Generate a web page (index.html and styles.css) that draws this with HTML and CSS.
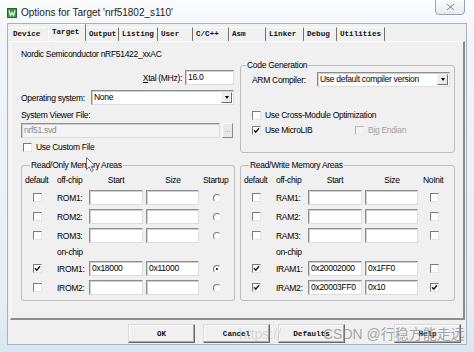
FILE: index.html
```html
<!DOCTYPE html>
<html lang="en">
  <head>
    <meta charset="UTF-8" />
    <meta name="viewport" content="width=device-width, initial-scale=1.0" />
    <title>Options for Target</title>
    <link rel="stylesheet" href="styles.css">
  </head>
  <body>
    <div class="titlebar">
      <svg class="app-icon" viewBox="0 0 10 10">
        <rect x="0.5" y="0.5" width="9" height="9" fill="#3a9c3f" stroke="#1f6b24" />
        <path d="M2 2.5 L3.5 7.5 L5 4.5 L6.5 7.5 L8 2.5" fill="none" stroke="#fff" stroke-width="1.1" />
      </svg>
      <span class="title">Options for Target 'nrf51802_s110'</span>
      <div class="close-btn">
        <svg viewBox="0 0 9 8" width="9" height="8">
          <path d="M1 1 L8 7 M8 1 L1 7" stroke="#fff" stroke-width="2.4" />
          <path d="M1 1 L8 7 M8 1 L1 7" stroke="#6d737b" stroke-width="1" />
        </svg>
      </div>
    </div>

    <div class="client">
      <div class="tabs">
        <span class="tab">Device</span>
        <span class="tab active">Target</span>
        <span class="tab">Output</span>
        <span class="tab">Listing</span>
        <span class="tab">User</span>
        <span class="tab">C/C++</span>
        <span class="tab">Asm</span>
        <span class="tab">Linker</span>
        <span class="tab">Debug</span>
        <span class="tab">Utilities</span>
      </div>

      <div class="panel">
        <div class="top">
          <div class="left-col">
            <div class="device-name">Nordic Semiconductor nRF51422_xxAC</div>
            <div class="xtal-row">
              <span class="xtal-label"><u>X</u>tal (MHz):</span>
              <span class="edit xtal">16.0</span>
            </div>
            <div class="os-row">
              <span>Operating system:</span>
              <span class="combo os"><span class="combo-text">None</span><span class="combo-btn"></span></span>
            </div>
            <div class="svf-label">System Viewer File:</div>
            <div class="svf-row">
              <span class="edit disabled svf">nrf51.svd</span>
              <span class="browse">...</span>
            </div>
            <div class="check-row custom">
              <span class="check"></span>
              <span>Use Custom File</span>
            </div>
          </div>

          <div class="group codegen">
            <div class="caption">Code Generation</div>
            <div class="cg-row arm-row">
              <span class="arm-label">ARM Compiler:</span>
              <span class="combo arm"><span class="combo-text">Use default compiler version</span><span class="combo-btn"></span></span>
            </div>
            <div class="cg-row check-row cross">
              <span class="check"></span>
              <span>Use Cross-Module Optimization</span>
            </div>
            <div class="cg-row check-row micro">
              <span class="micro-item">
                <span class="check"><svg class="tick" viewBox="0 0 7 7"><path d="M1 3.2 L2.8 5.2 L6 1.3" /></svg></span>
                <span>Use MicroLIB</span>
              </span>
              <span class="micro-item off">
                <span class="check disabled"></span>
                <span>B<u>i</u>g Endian</span>
              </span>
            </div>
          </div>
        </div>

        <div class="memory">
          <div class="group mem">
            <div class="caption">Read/Only Memory Areas</div>
            <div class="mem-head">
              <span>default</span><span>off-chip</span><span class="col-mid start">Start</span><span class="col-mid size">Size</span><span>Startup</span>
            </div>
            <div class="mem-row">
              <span class="check"></span><span>ROM1:</span><span class="edit start"></span><span class="edit size"></span><span class="radio"></span>
            </div>
            <div class="mem-row">
              <span class="check"></span><span>ROM2:</span><span class="edit start"></span><span class="edit size"></span><span class="radio"></span>
            </div>
            <div class="mem-row">
              <span class="check"></span><span>ROM3:</span><span class="edit start"></span><span class="edit size"></span><span class="radio"></span>
            </div>
            <div class="onchip">on-chip</div>
            <div class="mem-row">
              <span class="check"><svg class="tick" viewBox="0 0 7 7"><path d="M1 3.2 L2.8 5.2 L6 1.3" /></svg></span><span>IROM1:</span><span class="edit start">0x18000</span><span class="edit size">0x11000</span><span class="radio on"></span>
            </div>
            <div class="mem-row">
              <span class="check"></span><span>IROM2:</span><span class="edit start"></span><span class="edit size"></span><span class="radio"></span>
            </div>
          </div>

          <div class="group mem">
            <div class="caption">Read/Write Memory Areas</div>
            <div class="mem-head">
              <span>default</span><span>off-chip</span><span class="col-mid start">Start</span><span class="col-mid size">Size</span><span class="noinit-head">NoInit</span>
            </div>
            <div class="mem-row">
              <span class="check"></span><span>RAM1:</span><span class="edit start"></span><span class="edit size"></span><span class="check noinit"></span>
            </div>
            <div class="mem-row">
              <span class="check"></span><span>RAM2:</span><span class="edit start"></span><span class="edit size"></span><span class="check noinit"></span>
            </div>
            <div class="mem-row">
              <span class="check"></span><span>RAM3:</span><span class="edit start"></span><span class="edit size"></span><span class="check noinit"></span>
            </div>
            <div class="onchip">on-chip</div>
            <div class="mem-row">
              <span class="check"><svg class="tick" viewBox="0 0 7 7"><path d="M1 3.2 L2.8 5.2 L6 1.3" /></svg></span><span>IRAM1:</span><span class="edit start">0x20002000</span><span class="edit size">0x1FF0</span><span class="check noinit"></span>
            </div>
            <div class="mem-row">
              <span class="check"><svg class="tick" viewBox="0 0 7 7"><path d="M1 3.2 L2.8 5.2 L6 1.3" /></svg></span><span>IRAM2:</span><span class="edit start">0x20003FF0</span><span class="edit size">0x10</span><span class="check noinit"><svg class="tick" viewBox="0 0 7 7"><path d="M1 3.2 L2.8 5.2 L6 1.3" /></svg></span>
            </div>
          </div>
        </div>
      </div>

      <div class="buttons">
        <span class="btn">OK</span>
        <span class="btn">Cancel</span>
        <span class="btn">Defaults</span>
        <span class="btn help">Help</span>
      </div>
    </div>

    <!-- overlays: blog watermark and the mouse pointer -->
    <div class="watermark">
      <span class="wm-url">https://</span>
      <span class="wm-text">CSDN @行稳方能走远</span>
    </div>
    <svg class="cursor" viewBox="0 0 10 16">
      <path d="M0.5 0.5 L0.5 12.5 L3.3 9.8 L5.3 14.5 L7.2 13.7 L5.2 9.2 L9 9.2 Z" fill="#fff" stroke="#555" stroke-width="0.8" />
    </svg>
  </body>
</html>
```

FILE: styles.css
```css
* {
  margin: 0;
  padding: 0;
  box-sizing: border-box;
}

body {
  position: relative;
  width: 474px;
  height: 352px;
  overflow: hidden;
  background: linear-gradient(to bottom, #fbfcfd 0, #f1f4f8 40px, #e9eef4 300px, #d7e7f1 100%);
  font-family: "Liberation Sans", Arial, sans-serif;
  font-size: 8.5px;
  letter-spacing: -0.3px;
  color: #000;
}

/* title bar */
.titlebar {
  height: 23px;
  display: flex;
  align-items: flex-start;
}

.app-icon {
  width: 10px;
  height: 10px;
  margin: 8px 0 0 7px;
}

.title {
  margin: 6px 0 0 4px;
  font-size: 10px;
  line-height: 13px;
  letter-spacing: 0;
  color: #1b1b1b;
}

.close-btn {
  margin: -1px 9px 0 auto;
  width: 30px;
  height: 16px;
  border: 1px solid #98a1ad;
  border-radius: 0 0 4px 4px;
  background: linear-gradient(#fbfcfd, #e6eaef);
  display: flex;
  align-items: center;
  justify-content: center;
}

/* dialog client area */
.client {
  margin: 0 7px;
  height: 322px;
  border: 1px solid #a8b1bc;
  background: #f0f0f0;
}

.tabs {
  display: grid;
  grid-template-columns: 38px 38px 33px 39px 35px 36px 37px 38px 33px 48px;
  height: 17px;
  margin-left: 2px;
  align-items: end;
}

.tab {
  height: 14px;
  padding-left: 3px;
  border-top: 1px solid #fff;
  border-right: 1px solid #6f6f6f;
  font: bold 7.6px "Liberation Mono", monospace;
  line-height: 13px;
  letter-spacing: 0;
  white-space: nowrap;
  color: #111;
}

.tab.active {
  height: 17px;
  padding-top: 1px;
  line-height: 12px;
  border-left: 1px solid #fff;
  background: #f0f0f0;
  box-shadow: -2px 0 0 #f0f0f0;
}

.panel {
  margin-left: 2px;
  width: 455px;
  height: 279px;
  border-top: 1px solid #fff;
  border-left: 1px solid #fff;
  border-right: 2px solid #8c8c8c;
  border-bottom: 2px solid #8c8c8c;
  padding: 5px 0 0 10px;
}

.top,
.memory {
  display: grid;
  grid-template-columns: 214px 215px;
  column-gap: 5px;
}

.memory {
  margin-top: 12px;
}

/* left column */
.device-name {
  height: 14px;
  line-height: 14px;
}

.xtal-row {
  margin-top: 9px;
  height: 15px;
  display: flex;
  justify-content: flex-end;
  align-items: center;
}

.xtal-label {
  margin-right: 3px;
}

.os-row {
  margin-top: 5px;
  height: 15px;
  display: flex;
  align-items: center;
}

.svf-label {
  margin-top: 3px;
  height: 14px;
  line-height: 14px;
}

.svf-row {
  margin-top: 1px;
  display: flex;
}

.check-row {
  height: 12px;
  display: flex;
  align-items: center;
  gap: 4px;
}

.custom {
  margin-top: 3px;
  padding-left: 2px;
}

/* controls */
.edit {
  display: block;
  height: 15px;
  padding-left: 2px;
  line-height: 13px;
  border: 1px solid;
  border-color: #8d8e8f #dedede #dedede #8d8e8f;
  box-shadow: inset 1px 1px 0 #cfcfcf;
  background: #fff;
  white-space: nowrap;
  overflow: hidden;
}

.edit.disabled {
  background: #f4f4f4;
  color: #8a8a8a;
}

.xtal {
  width: 49px;
  margin-right: 1px;
}

.svf {
  width: 199px;
}

.browse {
  width: 11px;
  height: 15px;
  margin-left: 2px;
  border: 1px solid;
  border-color: #fff #8a8a8a #8a8a8a #fff;
  background: #e9e9e9;
  color: #8a8a8a;
  font-size: 7px;
  line-height: 12px;
  text-align: center;
  letter-spacing: 0;
}

.combo {
  display: flex;
  height: 15px;
  border: 1px solid;
  border-color: #8d8e8f #dedede #dedede #8d8e8f;
  box-shadow: inset 1px 1px 0 #cfcfcf;
  background: #fff;
}

.combo-text {
  flex: 1;
  padding-left: 2px;
  line-height: 13px;
  white-space: nowrap;
}

.combo-btn {
  width: 11px;
  margin: 1px;
  border: 1px solid;
  border-color: #f4f4f4 #6e6e6e #6e6e6e #f4f4f4;
  background: #ececec;
  display: flex;
  align-items: center;
  justify-content: center;
}

.combo-btn::after {
  content: "";
  border-left: 2.5px solid transparent;
  border-right: 2.5px solid transparent;
  border-top: 3px solid #000;
}

.os {
  width: 143px;
  margin: 0 1px 0 auto;
}

.check {
  display: flex;
  align-items: center;
  justify-content: center;
  width: 9px;
  height: 9px;
  border: 1px solid;
  border-color: #7b7b7b #e4e4e4 #e4e4e4 #7b7b7b;
  background: #fff;
}

.check.disabled {
  border-color: #b8b8b8 #ececec #ececec #b8b8b8;
  background: #f3f3f3;
}

.tick {
  width: 7px;
  height: 7px;
}

.tick path {
  fill: none;
  stroke: #111;
  stroke-width: 1.4;
}

.radio {
  display: flex;
  align-items: center;
  justify-content: center;
  width: 8px;
  height: 8px;
  margin-left: 10px;
  border-radius: 50%;
  border: 1px solid;
  border-color: #7b7b7b #ececec #ececec #7b7b7b;
  background: #fff;
}

.radio.on::after {
  content: "";
  width: 2px;
  height: 2px;
  border-radius: 50%;
  background: #000;
}

/* group boxes */
.group {
  border: 1px solid #bcbcbc;
  border-radius: 3px;
}

.caption {
  width: fit-content;
  height: 12px;
  margin: -7px 0 0 5px;
  padding: 0 1px;
  line-height: 12px;
  background: #f0f0f0;
}

.codegen {
  margin-top: 18px;
  height: 88px;
}

.cg-row {
  padding-left: 11px;
}

.arm-row {
  margin-top: 1px;
  height: 15px;
  display: flex;
  align-items: center;
}

.arm-label {
  width: 65px;
}

.arm {
  width: 133px;
}

.cross {
  margin-top: 22px;
}

.micro {
  margin-top: 3px;
}

.micro-item {
  display: flex;
  align-items: center;
  gap: 4px;
  width: 104px;
}

.micro-item.off {
  color: #a3a3a3;
}

/* memory areas */
.mem {
  height: 136px;
  padding: 0 0 3px 3px;
}

.mem-head,
.mem-row {
  display: grid;
  grid-template-columns: 32px 32px 57px 57px 1fr;
}

.mem-head {
  height: 12px;
  margin: 3px 0 2px;
  line-height: 12px;
}

.col-mid {
  width: 54px;
  text-align: center;
}

.noinit-head {
  margin-left: 1px;
}

.mem-row {
  height: 19px;
  align-items: center;
}

.mem-row > .check:first-child {
  margin-left: 8px;
}

.mem-row .noinit {
  margin-left: 8px;
}

.edit.start {
  width: 54px;
}

.edit.size {
  width: 53px;
}

.onchip {
  height: 14px;
  padding-left: 32px;
  line-height: 14px;
}

/* bottom buttons */
.buttons {
  display: flex;
  gap: 8px;
  margin-top: 4px;
  padding-left: 120px;
}

.btn {
  width: 67px;
  height: 19px;
  display: flex;
  align-items: center;
  justify-content: center;
  border: 1px solid;
  border-color: #d8d8d8 #6a6a6a #6a6a6a #d8d8d8;
  box-shadow: inset -1px -1px 0 #a8a8a8, inset 1px 1px 0 #fff;
  background: #f0f0f0;
  font: bold 7.6px "Liberation Mono", monospace;
  letter-spacing: 0;
  color: #111;
}

.btn.help {
  margin-left: 41px;
}

/* overlays */
.watermark {
  position: absolute;
  left: 239px;
  top: 326px;
  display: flex;
  font-family: "Liberation Sans", "Noto Sans CJK SC", sans-serif;
  font-size: 14px;
  line-height: 16px;
  letter-spacing: 0;
  white-space: nowrap;
}

.wm-url {
  width: 84px;
  color: rgba(150, 150, 150, 0.3);
}

.wm-text {
  color: rgba(130, 130, 130, 0.7);
}

.cursor {
  position: absolute;
  left: 86px;
  top: 157px;
  width: 10px;
  height: 16px;
}
```
